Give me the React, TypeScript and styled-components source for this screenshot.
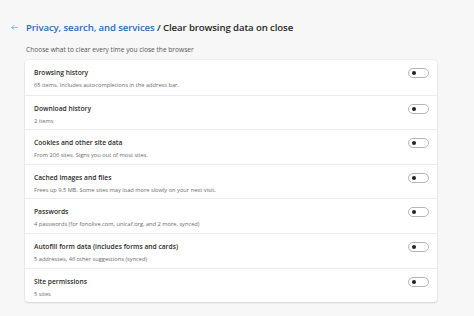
import styled, {createGlobalStyle} from "styled-components";

const GlobalStyle = createGlobalStyle`
  html, body {
    margin: 0;
    padding: 0;
    background: #f7f7f7;
  }
  body {
    font-family: "Open Sans", "Liberation Sans", sans-serif;
    color: #262626;
  }
`;

const Page = styled.div`
  width: 474px;
  height: 316px;
  box-sizing: border-box;
  padding: 20px 37px 0 25px;
  background: #f7f7f7;
  overflow: hidden;
`;

const Header = styled.header`
  display: flex;
  align-items: center;
  height: 14px;
  margin-left: -14px;
  gap: 8px;
`;

const BackArrow = styled.svg`
  width: 7px;
  height: 7px;
  flex: none;
`;

const Crumb = styled.h1`
  margin: 0;
  font-size: 9.6px;
  font-weight: 600;
  letter-spacing: -0.1px;
  white-space: nowrap;
  color: #262626;
`;

const CrumbLink = styled.span`
  color: #2a6cb3;
`;

const Description = styled.p`
  margin: 12px 0 0 1px;
  font-size: 6.6px;
  line-height: 8px;
  color: #555;
`;

const Card = styled.section`
  margin-top: 6px;
  background: #fff;
  border-radius: 3px;
  box-shadow: 0 0 0 0.5px rgba(0, 0, 0, 0.06), 0 1px 2px rgba(0, 0, 0, 0.12);
  display: flex;
  flex-direction: column;
`;

const Row = styled.div`
  display: flex;
  justify-content: space-between;
  align-items: flex-start;
  height: 34.6px;
  box-sizing: border-box;
  padding: 8px 8px 0 9px;
  & + & {
    border-top: 1px solid #ececec;
  }
`;

const RowText = styled.div`
  display: flex;
  flex-direction: column;
  gap: 4px;
`;

const Title = styled.div`
  font-size: 6.7px;
  line-height: 10px;
  font-weight: 600;
  color: #2b2b2b;
`;

const Sub = styled.div`
  font-size: 5.7px;
  line-height: 7px;
  color: #6b6b6b;
`;

const Toggle = styled.div`
  position: relative;
  width: 21px;
  height: 10px;
  box-sizing: border-box;
  border: 1px solid #b5b5b5;
  border-radius: 6px;
  background: #fff;
  flex: none;
  &::after {
    content: "";
    position: absolute;
    left: 3px;
    top: 2px;
    width: 4px;
    height: 4px;
    border-radius: 50%;
    background: #222;
  }
`;

const items = [
  {title: "Browsing history", sub: "65 items. Includes autocompletions in the address bar."},
  {title: "Download history", sub: "2 items"},
  {title: "Cookies and other site data", sub: "From 206 sites. Signs you out of most sites."},
  {title: "Cached images and files", sub: "Frees up 9.5 MB. Some sites may load more slowly on your next visit."},
  {title: "Passwords", sub: "4 passwords (for fonolive.com, unicaf.org, and 2 more, synced)"},
  {title: "Autofill form data (includes forms and cards)", sub: "5 addresses, 46 other suggestions (synced)"},
  {title: "Site permissions", sub: "5 sites"},
];

const App = () => {
  return (
    <>
      <GlobalStyle />
      <Page>
        <Header>
          <BackArrow viewBox="0 0 16 16">
            <path d="M15 8H2M7 3L2 8l5 5" fill="none" stroke="#4a7fbf" strokeWidth="1.2" strokeLinecap="round" strokeLinejoin="round" />
          </BackArrow>
          <Crumb>
            <CrumbLink>Privacy, search, and services</CrumbLink> / Clear browsing data on close
          </Crumb>
        </Header>
        <Description>Choose what to clear every time you close the browser</Description>
        <Card>
          {items.map(item => (
            <Row key={item.title}>
              <RowText>
                <Title>{item.title}</Title>
                <Sub>{item.sub}</Sub>
              </RowText>
              <Toggle />
            </Row>
          ))}
        </Card>
      </Page>
    </>
  );
};

export default App;
